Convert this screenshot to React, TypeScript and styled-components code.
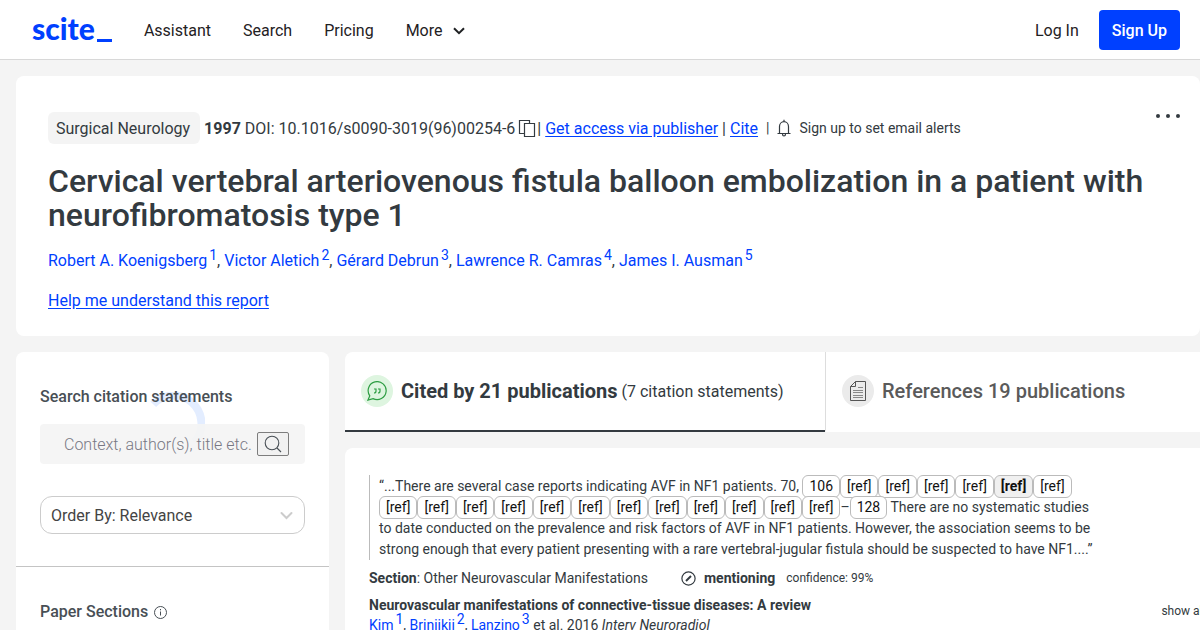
import React from 'react';
import styled, { createGlobalStyle } from 'styled-components';

const ink = '#333a40';
const blue = '#0040ff';

const GlobalStyle = createGlobalStyle`
  * { box-sizing: border-box; }
  body {
    margin: 0;
    background: #f4f4f4;
    color: ${ink};
    font: 400 16px/24px Roboto, "Liberation Sans", sans-serif;
    overflow-x: hidden;
  }
  button, input, select { font: inherit; color: inherit; }
`;

const Header = styled.header`
  display: flex;
  align-items: center;
  height: 60px;
  padding: 0 20px 0 32px;
  background: #fff;
  border-bottom: 1px solid #d8d8d8;
  color: #1f2123;
`;
const Logo = styled.a`
  display: flex;
  align-items: flex-start;
  gap: 2px;
  height: 25px;
  margin-right: 32px;
  color: ${blue};
  font: 900 30px/23px Lato, sans-serif;
  text-decoration: none;
  &::after {
    content: '';
    align-self: flex-end;
    width: 15px;
    height: 3px;
    background: ${blue};
  }
`;
const Nav = styled.nav`
  display: flex;
  gap: 32px;
  flex: 1;
`;
const NavLink = styled.a`
  padding-top: 2px;
  color: inherit;
  text-decoration: none;
`;
const NavButton = styled.button`
  display: flex;
  align-items: center;
  gap: 10px;
  padding: 2px 0 0;
  border: 0;
  background: none;
`;
const SignUp = styled.button`
  height: 40px;
  margin-left: 20px;
  padding: 2px 13px 0;
  border: 0;
  border-radius: 4px;
  background: ${blue};
  color: #fff;
  font-weight: 500;
`;

const Page = styled.main`
  display: grid;
  gap: 16px;
  padding: 16px 0 0 16px;
`;
const Panel = styled.section`
  background: #fff;
  border-radius: 8px;
`;
const Paper = styled(Panel)`
  padding: 36px 20px 23px 32px;
`;
const MetaRow = styled.div`
  display: flex;
  align-items: center;
  height: 32px;
  gap: 4px;
  & > span, & > strong, & > a { padding-top: 2px; }
`;
const Journal = styled.div`
  padding: 5px 10px 3px 8px;
  border-radius: 6px;
  background: #f4f4f4;
`;
const Doi = styled.span`
  display: flex;
  align-items: center;
  gap: 1px;
`;
const IconButton = styled.button`
  display: flex;
  padding: 0;
  border: 0;
  background: none;
`;
const Link = styled.a`
  color: ${blue};
  text-decoration: underline;
  text-underline-offset: 2px;
`;
const AlertButton = styled(IconButton)`
  align-items: center;
  gap: 8px;
  margin-left: 4px;
  font-size: 14px;
`;
const Dots = styled(IconButton)`
  margin-left: auto;
  align-self: flex-start;
`;
const Title = styled.h1`
  margin: 20px 0 17px;
  font-size: 32px;
  line-height: 34px;
  font-weight: 500;
`;
const Authors = styled.div`
  margin-bottom: 16px;
`;
const Author = styled.a`
  color: ${blue};
  text-decoration: none;
`;
const Sup = styled.sup`
  margin-left: 2px;
  font-size: 14px;
  line-height: 0;
`;

const Columns = styled.div`
  display: flex;
  gap: 16px;
  align-items: stretch;
  overflow: hidden;
`;
const Sidebar = styled(Panel).attrs({ as: 'aside' })`
  position: relative;
  flex: 0 0 313px;
  min-width: 0;
  color: #484f55;
`;
const Spinner = styled.svg`
  position: absolute;
  top: 40px;
  left: 125px;
`;
const Filters = styled.form`
  position: relative;
  padding: 33px 24px 32px;
  border-bottom: 1px solid #c4c4c4;
`;
const SideTitle = styled.h2`
  display: flex;
  align-items: center;
  gap: 6px;
  margin: 0;
  font-size: 16px;
  line-height: 24px;
  font-weight: 500;
`;
const SearchBox = styled.div`
  display: flex;
  align-items: center;
  height: 40px;
  margin: 15px 0 32px;
  padding: 0 16px 0 24px;
  border-radius: 4px;
  background: rgba(244, 244, 244, 0.92);
`;
const SearchInput = styled.input`
  flex: 1;
  width: 0;
  min-width: 0;
  padding: 2px 0 0;
  border: 0;
  background: none;
  font-weight: 300;
  &::placeholder { color: #787884; opacity: 1; }
`;
const SearchButton = styled.button`
  display: grid;
  place-items: center;
  width: 32px;
  height: 24px;
  padding: 0;
  border: 1px solid #7d7d7d;
  border-radius: 2px;
  background: #f1f1f1;
`;
const SelectWrap = styled.div`
  display: grid;
  align-items: center;
  & > * { grid-area: 1 / 1; }
  & > svg { justify-self: end; margin-right: 12px; pointer-events: none; }
`;
const Select = styled.select`
  appearance: none;
  height: 38px;
  padding: 2px 10px 0;
  border: 1px solid #ccc;
  border-radius: 12px;
  background: #fff;
  color: #444;
`;
const SideSection = styled.div`
  padding: 33px 24px 32px;
`;

const Results = styled.div`
  display: grid;
  align-content: start;
  gap: 16px;
  flex: 0 0 960px;
`;
const Tabs = styled.div`
  display: grid;
  grid-template-columns: 1fr 1fr;
  overflow: hidden;
  border-radius: 8px 8px 0 0;
`;
const Tab = styled.button<{ $active?: boolean }>`
  display: flex;
  align-items: center;
  gap: 8px;
  height: 80px;
  padding: 0 16px;
  border: 0;
  border-left: ${p => (p.$active ? '0' : '1px solid #ddd')};
  border-bottom: ${p => (p.$active ? `2px solid ${ink}` : '2px solid #fff')};
  background: #fff;
  color: ${p => (p.$active ? ink : '#5a5a5a')};
`;
const TabBadge = styled.span<{ $green?: boolean }>`
  display: grid;
  place-items: center;
  width: 32px;
  height: 32px;
  border-radius: 50%;
  background: ${p => (p.$green ? '#def5e0' : '#ebebeb')};
`;
const TabLabel = styled.span<{ $bold?: boolean }>`
  font-size: 20px;
  font-weight: ${p => (p.$bold ? 700 : 500)};
`;
const Count = styled.span`
  margin-left: -4px;
  padding-top: 2px;
`;

const Statement = styled(Panel)`
  padding: 27px 68px 24px 24px;
  font-size: 14px;
  line-height: 21px;
`;
const Quote = styled.blockquote`
  max-width: 730px;
  margin: 0;
  padding: 1px 0 0 9px;
  border-left: 1px solid #bbb;
  overflow: hidden;
`;
const Ref = styled.button<{ $current?: boolean }>`
  margin: -1px 0;
  padding: 0 6px;
  border: 1px solid #bbb;
  border-radius: 6px;
  background: ${p => (p.$current ? '#f0f0f0' : '#fff')};
  color: #111;
  font-weight: ${p => (p.$current ? 700 : 400)};
  line-height: 21px;
`;
const Facts = styled.div`
  display: flex;
  align-items: center;
  gap: 8px;
  margin-top: 8px;
`;
const Kind = styled.span`
  display: flex;
  align-items: center;
  gap: 8px;
  margin: 0 3px 0 25px;
  font-weight: 700;
`;
const Small = styled.span`
  font-size: 12px;
`;
const Citing = styled.div`
  display: flex;
  align-items: flex-start;
  justify-content: space-between;
  margin-top: 6px;
`;
const CitingTitle = styled.h3`
  margin: 0;
  font-size: 14px;
  line-height: 20px;
  font-weight: 700;
`;
const ShowButton = styled.button`
  margin-top: 6px;
  padding: 0;
  border: 0;
  background: none;
  font-size: 12px;
`;

const authors = ['Robert A. Koenigsberg', 'Victor Aletich', 'Gérard Debrun', 'Lawrence R. Camras', 'James I. Ausman'];
const citing = ['Kim', 'Brinjikji', 'Lanzino'];

const People = ({ names }: { names: string[] }) => (
  <>
    {names.map((n, i) => (
      <React.Fragment key={n}>
        {i > 0 && ', '}
        <Author href="#">{n}<Sup>{i + 1}</Sup></Author>
      </React.Fragment>
    ))}
  </>
);

const refs = (n: number) => Array.from({ length: n }, (_, i) => <React.Fragment key={i}><Ref>[ref]</Ref><wbr /></React.Fragment>);

export default function App() {
  return (
    <>
      <GlobalStyle />
      <Header>
        <Logo href="#">scite</Logo>
        <Nav>
          <NavLink href="#">Assistant</NavLink>
          <NavLink href="#">Search</NavLink>
          <NavLink href="#">Pricing</NavLink>
          <NavButton>
            More
            <svg width="12" height="8" viewBox="0 0 12 8" fill="none" stroke="currentColor" strokeWidth="2"><path d="M1 1.2l5 5 5-5" /></svg>
          </NavButton>
        </Nav>
        <NavLink href="#">Log In</NavLink>
        <SignUp>Sign Up</SignUp>
      </Header>
      <Page>
        <Paper>
          <MetaRow>
            <Journal>Surgical Neurology</Journal>
            <strong>1997</strong>
            <Doi>
              DOI: 10.1016/s0090-3019(96)00254-6
              <IconButton aria-label="Copy DOI">
                <svg width="20" height="18" viewBox="0 0 20 18" fill="none" stroke="currentColor" strokeWidth="1.2"><path d="M8 13.5H3.500V.500H13.500V3M8.500 3.500h10v13h-10z" /></svg>
              </IconButton>
              |
            </Doi>
            <Link href="#">Get access via publisher</Link>
            <span>|</span>
            <Link href="#">Cite</Link>
            <AlertButton>
              <span>|</span>
              <svg width="14" height="18" viewBox="0 0 14 18" fill="none" stroke="currentColor" strokeWidth="1.2"><path d="M.5 14.500h13M2.500 14.500V7.500a4.500 4.900 0 0 1 9 0v7M7 2.500V.8M5.500 15a1.500 2 0 0 0 3 0" /></svg>
              Sign up to set email alerts
            </AlertButton>
            <Dots aria-label="More options">
              <svg width="24" height="8" viewBox="0 0 24 8" fill="currentColor"><circle cx="2" cy="4" r="2" /><circle cx="12" cy="4" r="2" /><circle cx="22" cy="4" r="2" /></svg>
            </Dots>
          </MetaRow>
          <Title>Cervical vertebral arteriovenous fistula balloon embolization in a patient with neurofibromatosis type 1</Title>
          <Authors><People names={authors} /></Authors>
          <Link href="#">Help me understand this report</Link>
        </Paper>
        <Columns>
          <Sidebar>
            <Spinner width="64" height="64" viewBox="0 0 64 64" fill="none" stroke="#e3edff" strokeWidth="8" aria-hidden="true">
              <path d="M12.200 12.200A28 28 0 0 1 53.500 50" />
            </Spinner>
            <Filters onSubmit={e => e.preventDefault()}>
              <SideTitle as="label" htmlFor="q">Search citation statements</SideTitle>
              <SearchBox>
                <SearchInput id="q" placeholder="Context, author(s), title etc." />
                <SearchButton aria-label="Search">
                  <svg width="18" height="18" viewBox="0 0 18 18" fill="none" stroke="currentColor" strokeWidth="1.100"><circle cx="8" cy="8" r="6.800" /><path d="M13 13l4 4" /></svg>
                </SearchButton>
              </SearchBox>
              <SelectWrap>
                <Select aria-label="Order by"><option>Order By: Relevance</option></Select>
                <svg width="13" height="9" viewBox="0 0 13 9" fill="none" stroke="#ccc" strokeWidth="2" strokeLinecap="round"><path d="M1.500 2l5 5 5-5" /></svg>
              </SelectWrap>
            </Filters>
            <SideSection>
              <SideTitle>
                Paper Sections
                <svg width="13" height="13" viewBox="0 0 13 13" fill="none" stroke="currentColor"><circle cx="6.500" cy="6.500" r="6" /><path d="M6.500 5.500v4M6.500 3v1.300" /></svg>
              </SideTitle>
            </SideSection>
          </Sidebar>
          <Results>
            <Tabs role="tablist">
              <Tab role="tab" aria-selected="true" $active>
                <TabBadge $green>
                  <svg width="20" height="20" viewBox="0 0 20 20" fill="none" stroke="#2f9e44" strokeWidth="1.200"><path d="M2.800 14.800A9 9 0 1 1 6 17.600L1 19z" /><path d="M7 8h2v2q0 2-2 2M11 8h2v2q0 2-2 2" /></svg>
                </TabBadge>
                <TabLabel $bold>Cited by 21 publications</TabLabel>
                <Count>(7 citation statements)</Count>
              </Tab>
              <Tab role="tab" aria-selected="false">
                <TabBadge>
                  <svg width="16" height="20" viewBox="0 0 16 20" fill="none" stroke="#555"><path d="M5.500.500h10v19H.500v-14zM5.500.500v5h-5" /><path d="M8 6.500h5M3 9.500h10M3 11.500h10M3 14.500h10M3 16.500h10" stroke="#888" /></svg>
                </TabBadge>
                <TabLabel>References 19 publications</TabLabel>
              </Tab>
            </Tabs>
            <Statement>
              <Quote>
                “...There are several case reports indicating AVF in NF1 patients. 70, <Ref>106</Ref>{refs(4)}<Ref $current>[ref]</Ref>{refs(13)}–<Ref>128</Ref> There are no systematic studies to date conducted on the prevalence and risk factors of AVF in NF1 patients. However, the association seems to be strong enough that every patient presenting with a rare vertebral-jugular fistula should be suspected to have NF1....”
              </Quote>
              <Facts>
                <span><strong>Section</strong>: Other Neurovascular Manifestations</span>
                <Kind>
                  <svg width="15" height="15" viewBox="0 0 15 15" fill="none" stroke="currentColor" strokeWidth="1.200"><circle cx="7.500" cy="7.500" r="6.600" /><path d="M5 10l5-5" strokeWidth="2" /></svg>
                  mentioning
                </Kind>
                <Small>confidence: 99%</Small>
              </Facts>
              <Citing>
                <div>
                  <CitingTitle>Neurovascular manifestations of connective-tissue diseases: A review</CitingTitle>
                  <div><People names={citing} /> et al. 2016 <em>Interv Neuroradiol</em></div>
                </div>
                <ShowButton>show abstract</ShowButton>
              </Citing>
            </Statement>
          </Results>
        </Columns>
      </Page>
    </>
  );
}
